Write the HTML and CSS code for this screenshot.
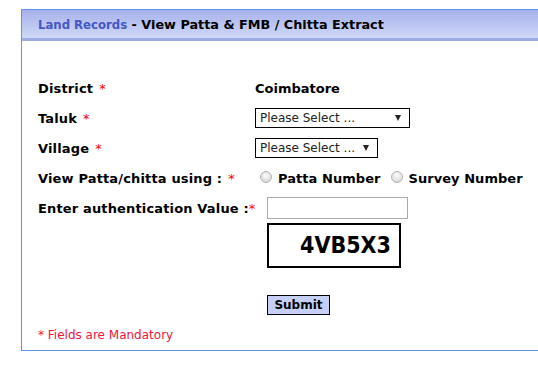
FILE: index.html
```html
<!DOCTYPE html>
<html>
<head>
<meta charset="utf-8">
<link rel="stylesheet" href="styles.css">
</head>
<body>
<div class="panel">
  <div class="head"><span class="crumb">Land Records</span> - View Patta &amp; FMB / Chitta Extract</div>
  <div class="form">
    <div class="lbl">District<span class="req sp">*</span></div>
    <div class="val"><b>Coimbatore</b></div>

    <div class="lbl">Taluk<span class="req sp">*</span></div>
    <div class="val"><span class="sel wide"><select><option>Please Select ...</option></select></span></div>

    <div class="lbl">Village<span class="req sp">*</span></div>
    <div class="val"><span class="sel narrow"><select><option>Please Select ...</option></select></span></div>

    <div class="lbl">View Patta/chitta using :<span class="req sp">*</span></div>
    <div class="val radios">
      <label class="opt"><input type="radio" name="m"><b>Patta Number</b></label>
      <label class="opt"><input type="radio" name="m"><b>Survey Number</b></label>
    </div>

    <div class="lbl">Enter authentication Value :<span class="req">*</span></div>
    <div class="val"><input type="text" class="txt"></div>

    <div class="lbl"></div>
    <div class="val captcha-cell"><div class="captcha">4VB5X3</div></div>

    <div class="lbl"></div>
    <div class="val submit-cell"><button class="btn">Submit</button></div>
  </div>
  <div class="note">* Fields are Mandatory</div>
</div>
</body>
</html>
```

FILE: styles.css
```css
html, body {
  margin: 0;
  padding: 0;
  background: #fff;
}
body {
  padding: 9px 0 0 21px;
  font-family: "DejaVu Sans", Verdana, sans-serif;
  color: #000;
}
.panel {
  border: 1px solid #5f93ee;
  border-right: none;
  height: 342px;
  box-sizing: border-box;
  width: 540px;
}
.head {
  height: 31px;
  box-sizing: border-box;
  background: linear-gradient(#a6b1ea, #cfd8f8);
  border-bottom: 3px solid #9eaae3;
  padding: 6px 0 0 16px;
  font-size: 12.8px;
  font-weight: bold;
  line-height: 18px;
}
.crumb {
  color: #4457c4;
  font-family: "DejaVu Sans Condensed", "DejaVu Sans", sans-serif;
  font-weight: bold;
  font-size: 13px;
}
.form {
  display: grid;
  grid-template-columns: 217px auto;
  grid-template-rows: repeat(5, 30px) 45px 47px;
  padding: 32px 0 0 16px;
  font-size: 13px;
}
.lbl {
  font-weight: bold;
  display: flex;
  align-items: center;
  white-space: nowrap;
  letter-spacing: 0.15px;
}
.req {
  color: #f00;
  font-weight: normal;
}
.req.sp {
  margin-left: 6px;
}
.val {
  display: flex;
  align-items: center;
}
.sel {
  position: relative;
  display: inline-block;
}
.sel select {
  appearance: none;
  -webkit-appearance: none;
  border: 1px solid #000;
  border-radius: 0;
  background: #fff;
  height: 20px;
  font-family: "DejaVu Sans", Verdana, sans-serif;
  font-size: 12px;
  color: #222;
  padding: 0 0 0 4px;
  margin: 0;
  box-sizing: border-box;
  display: block;
}
.sel.wide select { width: 155px; }
.sel.narrow select { width: 123px; }
.sel::after {
  content: "";
  position: absolute;
  top: 7px;
  right: 9px;
  border-left: 3px solid transparent;
  border-right: 3px solid transparent;
  border-top: 6px solid #222;
  pointer-events: none;
}
.opt {
  display: flex;
  align-items: center;
  margin-right: 3px;
}
.opt b {
  letter-spacing: 0.05px;
}
.opt input {
  appearance: none;
  -webkit-appearance: none;
  width: 12px;
  height: 12px;
  margin: 0 6px 3px 5px;
  border-radius: 50%;
  border: 1px solid #b4b4b4;
  background: radial-gradient(circle at 50% 35%, #fbfbfb, #dcdcdc 70%, #cfcfcf);
  box-sizing: border-box;
}
.opt + .opt input { margin-left: 7px; }
.txt {
  margin: 0 0 0 12px;
  width: 141px;
  height: 22px;
  box-sizing: border-box;
  border: 1px solid #aaa;
  padding: 0;
}
.captcha-cell {
  align-items: flex-start;
}
.captcha {
  margin-left: 12px;
  width: 134px;
  height: 45px;
  box-sizing: border-box;
  border: 2px solid #000;
  font-family: "DejaVu Sans Condensed", "DejaVu Sans", sans-serif;
  font-weight: bold;
  font-size: 23px;
  line-height: 41px;
  padding-left: 31px;
}
.submit-cell {
  align-items: flex-start;
  padding-top: 27px;
}
.btn {
  margin-left: 12px;
  height: 20px;
  width: 63px;
  padding: 0;
  border: 1px solid #000;
  border-radius: 0;
  background: #c6d0f7;
  font-family: "DejaVu Sans", Verdana, sans-serif;
  font-weight: bold;
  font-size: 12px;
  color: #000;
}
.note {
  padding: 0 0 0 16px;
  margin-top: 13px;
  color: #f0143c;
  font-size: 12px;
}
```
